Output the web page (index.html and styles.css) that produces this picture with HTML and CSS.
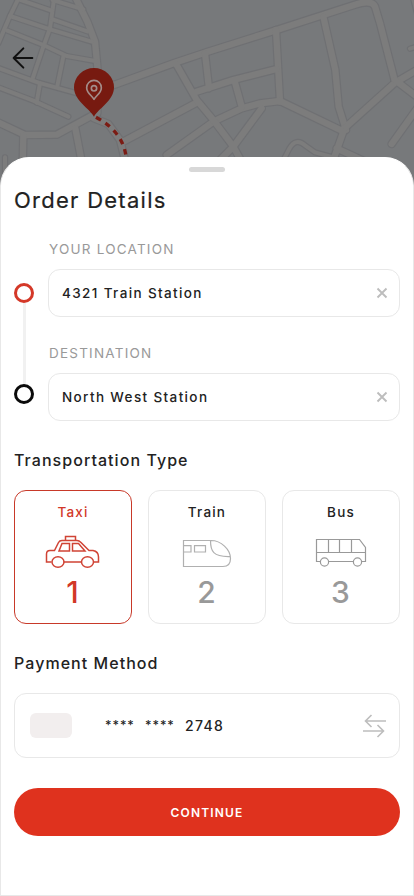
FILE: index.html
```html
<!DOCTYPE html>
<html lang="en">
<head>
<meta charset="utf-8">
<meta name="viewport" content="width=device-width, initial-scale=1">
<title>Order Details</title>
<link rel="stylesheet" href="styles.css">
</head>
<body>
<div class="app">
  <svg class="map" viewBox="0 0 1242 600" aria-hidden="true">
    <defs>
      <g id="roads">
        <path class="avenue" d="M225-10L262 65L285 125L292 200V340L270 350L170 404L75 405L-10 365"/>
        <path class="avenue" d="M290 270L350 252L520 190L621 156L830 90L1065 14Q1115-2 1125 20L1140 70L1185 245"/>
        <path class="avenue" d="M828 90L840 305M970 50L1006 210L1016 320L1038 390"/>
        <path class="avenue" d="M282 355L325 372L360 420L380 500M370 425L590 308M500 465L640 365L725 325L780 310L840 303L1025 392L1185 248L1250 210"/>
        <path class="avenue" d="M530 195L590 300L640 360L700 440L725 485M615 160L627 265M590 275L700 240L830 207M703 240L725 320M785 325L700 440L660 480"/>
        <path class="avenue" d="M1030 395L1000 480L970 530M1010 445L1150 510M226 385L248 500M70 408L68 500M1185 240L1250 290"/>
        <path class="avenue" d="M1255 320L1175 432"/>
        <path class="street" d="M840 500L868 446Q888 412 915 436L945 457L1010 475"/>
        <path class="street" d="M58-10L30 48L-5 130M163-10L150 85L130 140L98 235M190 170L172 258M120 250L110 308"/>
        <path class="street" d="M30 48L150 88L275 125M158 58L262 94M22 92L130 135L200 168L290 184M50-4L155 32M158 0L250 28"/>
        <path class="street" d="M-10 202L115 248L275 292M-10 260L100 302L205 350"/>
        <path class="street" d="M15 472V540M1250 140L1230 146M1238-10L1252 45"/>
      </g>
    </defs>
    <use href="#roads" class="road-edge"/>
    <use href="#roads" class="road-fill"/>
    <path class="route" d="M285 350Q380 400 379 490"/>
    <path class="pin" d="M282 350C268 325 222 302 222 262A60 58 0 0 1 342 262C342 302 296 325 282 350Z"/>
    <g class="pin-mark">
      <path d="M282 298C275 286 260 279 260 263A22 22 0 0 1 304 263C304 279 289 286 282 298Z"/>
      <circle cx="282" cy="265" r="8"/>
    </g>
    <path class="back" d="M97 174H41M70 145L41 174L70 203"/>
  </svg>

  <main class="sheet">
    <div class="handle"></div>
    <h1>Order Details</h1>
    <section class="trip">
      <div class="rail"><i class="stop stop-start"></i><i class="line"></i><i class="stop"></i></div>
      <div class="fields">
        <div class="label">YOUR LOCATION</div>
        <div class="field"><span>4321 Train Station</span><svg width="12" height="12" viewBox="0 0 12 12"><path d="M1.5 1.5L10.5 10.5M10.5 1.5L1.5 10.5"/></svg></div>
        <div class="label label-second">DESTINATION</div>
        <div class="field"><span>North West Station</span><svg width="12" height="12" viewBox="0 0 12 12"><path d="M1.5 1.5L10.5 10.5M10.5 1.5L1.5 10.5"/></svg></div>
      </div>
    </section>

    <h2>Transportation Type</h2>
    <section class="types">
      <div class="type selected">
        <span class="name">Taxi</span>
        <svg width="58" height="36" viewBox="0 0 58 36"><path d="M7.500 29H2.500V21Q2.500 17.500 6 17.500H10.500L14.500 9.500Q15.500 7.500 18 7.500H33Q35 7.500 37 9.500L45 17.500H49Q54.500 18.500 54.500 24V29H49.500M37.500 29H19.500M21.500 7V3.500H31.500V7M18 10.500H25.500V18H15ZM28.500 10.500H34.500L41 18H28.500Z"/><ellipse cx="14" cy="29" rx="6" ry="5.300"/><ellipse cx="43.500" cy="29" rx="6" ry="5.300"/></svg>
        <b>1</b>
      </div>
      <div class="type">
        <span class="name">Train</span>
        <svg width="58" height="36" viewBox="0 0 58 36"><path d="M5.500 7.500H33C43 7.500 52.500 16.500 52.500 25.500Q52.500 33.500 45 33.500H5.500ZM32.500 7.500C32.500 18 35 24 52 23.500M5.500 12.700H13V19H5.500M16.500 12.700H27.500V19H16.500Z"/></svg>
        <b>2</b>
      </div>
      <div class="type bus">
        <span class="name">Bus</span>
        <svg width="58" height="36" viewBox="0 0 58 36"><path d="M8.500 28.500H4.500V6.500H47.500L53.500 14.500V28.500H49.500M41.500 28.500H16.500M4.500 19.500H53.500M16.500 6.500V19.500M27.500 6.500V19.500M39.500 6.500V19.500"/><circle cx="12.500" cy="29" r="4.100"/><circle cx="45.500" cy="29" r="4.100"/></svg>
        <b>3</b>
      </div>
    </section>

    <h2 class="payment-title">Payment Method</h2>
    <section class="payment">
      <i class="card-chip"></i>
      <div class="digits"><span class="masked">****</span> <span class="masked">****</span> <span>2748</span></div>
      <svg width="24" height="24" viewBox="0 0 24 24"><path d="M24 7H3.500M9.500 1L3.500 7L9.500 13M1 17H21.500M15.500 11L21.500 17L15.500 23"/></svg>
    </section>
    <button>CONTINUE</button>
  </main>
</div>
</body>
</html>
```
FILE: styles.css
```css
* { box-sizing: border-box; }
body {
  margin: 0;
  background: #77787a;
  color: #222;
  font-family: Inter, sans-serif;
}
.app { height: 896px; overflow: hidden; background: #77797b; }
.map { display: block; width: 414px; height: 200px; fill: none; stroke-linejoin: round; stroke-linecap: round; }
.avenue { stroke-width: calc(18px + var(--edge)); }
.street { stroke-width: calc(11px + var(--edge)); }
.road-edge { --edge: 8px; stroke: #6f7073; filter: blur(1px); }
.road-fill { --edge: 1px; stroke: #7c7c7c; }
.route { stroke: #7b1c14; stroke-width: 10; stroke-dasharray: 17 16; stroke-dashoffset: -3; stroke-linecap: butt; }
.pin { fill: #771a10; }
.pin-mark { stroke: #a38c89; stroke-width: 5; }
.back { stroke: #111; stroke-width: 6; }

.sheet {
  position: relative;
  height: 739px;
  margin-top: -43px;
  padding: 9px 13px 0;
  background: #fff;
  border: 1px solid #e8e8e8;
  border-top-color: #fff;
  border-radius: 29px 29px 0 0;
}
.handle { width: 36px; height: 5px; margin: 0 auto; border-radius: 3px; background: #d8d8d8; }
h1 { margin: 13px 0 0; font-size: 22px; font-weight: 400; line-height: 30px; letter-spacing: 1.27px; -webkit-text-stroke: .2px #222; }
.trip { display: flex; gap: 14px; margin-top: 26px; }
.rail { display: flex; flex-direction: column; align-items: center; width: 20px; height: 163px; padding-top: 42px; }
.stop { flex: none; width: 20px; height: 20px; border: 3px solid #0b0b0b; border-radius: 50%; }
.stop-start { border-color: #d43828; }
.line { flex: 1; width: 3px; margin-left: 1px; background: #f1f1f1; }
.fields { flex: 1; }
.label { height: 28px; padding-left: 1px; font-size: 13.5px; line-height: 17px; font-weight: 400; letter-spacing: 1.22px; color: #999; }
.label-second { margin-top: 28px; }
.field {
  display: flex; align-items: center; justify-content: space-between;
  height: 48px; padding: 0 11px 1px 13px;
  border: 1px solid #e8e8e8; border-radius: 12px;
  font-size: 13.5px; font-weight: 500; letter-spacing: 1.37px;
}
.field svg { stroke: #bdbdbd; stroke-width: 1.9; }
h2 { margin: 29px 0 0; font-size: 16px; font-weight: 500; line-height: 20px; letter-spacing: 1.05px; }
.types { display: grid; grid-template-columns: repeat(3, 118px); gap: 16px; margin-top: 20px; }
.type {
  display: flex; flex-direction: column; align-items: center;
  height: 134px; padding-top: 12px;
  border: 1px solid #e8e8e8; border-radius: 12px;
}
.name { font-size: 13.5px; font-weight: 500; line-height: 18px; letter-spacing: 1.2px; }
.type svg { margin-top: 12px; fill: none; stroke: #b0b0b0; stroke-width: 1.2; }
.bus svg { stroke: #999; }
.type b { margin: 5px 1px 0 0; font-size: 30px; font-weight: 500; line-height: 36px; color: #999; }
.selected { border-color: #c83929; }
.selected .name, .selected b { color: #d23828; }
.selected svg { stroke: #d04335; stroke-width: 1.5; }
.payment-title { margin-top: 29px; }
.payment {
  display: flex; align-items: center;
  height: 65px; margin-top: 20px; padding: 0 13px 0 15px;
  border: 1px solid #e8e8e8; border-radius: 12px;
}
.card-chip { width: 42px; height: 25px; border-radius: 6px; background: #f2eeee; }
.digits { display: flex; align-items: center; margin-left: 33px; font-size: 14px; font-weight: 450; letter-spacing: 1.3px; }
.masked { width: 40px; font-size: 12.5px; letter-spacing: .95px; }
.payment svg { margin-left: auto; fill: none; stroke: #bdbdbd; stroke-width: 1.6; }
button {
  display: block; width: 100%; height: 48px; margin-top: 30px; padding: 0;
  border: 0; border-radius: 24px; background: #df321e; color: #fff;
  font: 600 12px Inter, sans-serif; letter-spacing: 1.15px;
}
```
